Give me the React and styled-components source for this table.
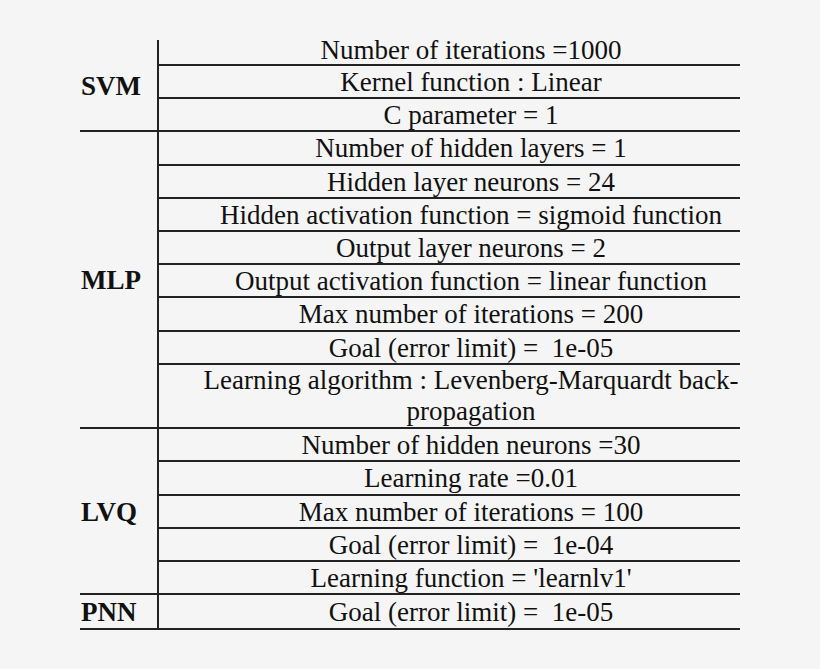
import React from 'react';
import styled, { createGlobalStyle } from 'styled-components';

const GlobalStyle = createGlobalStyle`
  html, body {
    margin: 0;
    padding: 0;
    background: #f5f5f5;
  }
`;

const groups = [
  {
    name: 'SVM',
    params: ['Number of iterations =1000', 'Kernel function : Linear', 'C parameter = 1'],
  },
  {
    name: 'MLP',
    params: [
      'Number of hidden layers = 1',
      'Hidden layer neurons = 24',
      'Hidden activation function = sigmoid function',
      'Output layer neurons = 2',
      'Output activation function = linear function',
      'Max number of iterations = 200',
      'Goal (error limit) =  1e-05',
      ['Learning algorithm : Levenberg-Marquardt back-', 'propagation'],
    ],
  },
  {
    name: 'LVQ',
    params: [
      'Number of hidden neurons =30',
      'Learning rate =0.01',
      'Max number of iterations = 100',
      'Goal (error limit) =  1e-04',
      "Learning function = 'learnlv1'",
    ],
  },
  {
    name: 'PNN',
    params: ['Goal (error limit) =  1e-05'],
  },
];

const App = () => {
  return (
    <Page>
      <GlobalStyle />
      <Table>
        <tbody>
          {groups.map((g, gi) =>
            g.params.map((p, i) => (
              <tr key={g.name + i}>
                {i === 0 && (
                  <Label rowSpan={g.params.length}>{g.name}</Label>
                )}
                {gi === 0 && i === 0 ? (
                  <FirstParam>{p}</FirstParam>
                ) : Array.isArray(p) ? (
                  <WrapParam>
                    {p[0]}
                    <br />
                    {p[1]}
                  </WrapParam>
                ) : (
                  <Param>{p}</Param>
                )}
              </tr>
            ))
          )}
        </tbody>
      </Table>
    </Page>
  );
};

export default App;

const Page = styled.div`
  padding: 40px 80px;
  font-family: "Liberation Serif", "Times New Roman", serif;
  color: #111;
`;

const Table = styled.table`
  width: 660px;
  border-collapse: separate;
  border-spacing: 0;
  font-size: 27px;
`;

const Label = styled.td`
  width: 76px;
  padding: 2px 0 0 1px;
  font-weight: bold;
  text-align: left;
  vertical-align: middle;
  border-right: 2px solid #222;
  border-bottom: 2px solid #222;
  white-space: nowrap;
`;

const Param = styled.td`
  padding: 2px 0 0 43px;
  line-height: 29.2px;
  text-align: center;
  white-space: pre;
  border-bottom: 2px solid #222;
`;

const FirstParam = styled(Param)`
  padding: 1px 0 5px 43px;
  line-height: 18px;
`;

const WrapParam = styled(Param)`
  padding: 0 0 0 43px;
  line-height: 31.2px;
`;
